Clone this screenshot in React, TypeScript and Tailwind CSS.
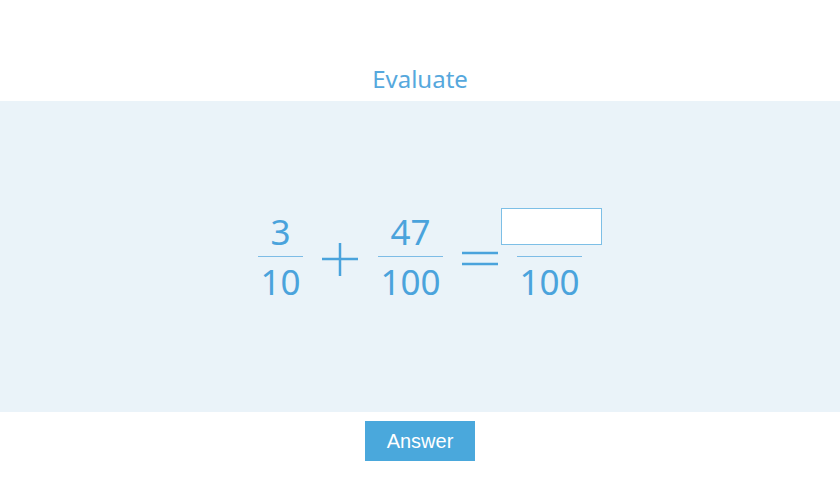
const blue = "text-[#4aa3dc]";

function Fraction({ top, bottom, width }: { top: string; bottom: string; width: string }) {
  return (
    <div className={`flex flex-col items-center ${width}`}>
      <div className={`h-[40px] leading-[40px] text-[35px] ${blue} mb-[4px]`}>{top}</div>
      <div className="h-px w-full bg-[#7dbce6]" />
      <div className={`h-[40px] leading-[40px] text-[35px] ${blue} mt-[5px]`}>{bottom}</div>
    </div>
  );
}

function Plus() {
  return (
    <svg width="36" height="36" viewBox="0 0 36 36" className="mt-[30px] shrink-0">
      <line x1="0" y1="17" x2="36" y2="17" stroke="#4aa3dc" strokeWidth="2.5" />
      <line x1="18" y1="1" x2="18" y2="34" stroke="#4aa3dc" strokeWidth="2.5" />
    </svg>
  );
}

function Equals() {
  return (
    <svg width="36" height="20" viewBox="0 0 36 20" className="mt-[36px] shrink-0">
      <line x1="0" y1="5" x2="36" y2="5" stroke="#4aa3dc" strokeWidth="2.5" />
      <line x1="0" y1="16" x2="36" y2="16" stroke="#4aa3dc" strokeWidth="2.5" />
    </svg>
  );
}

export default function App() {
  return (
    <div className="w-[840px] h-[501px] bg-white" style={{ fontFamily: '"Noto Sans", sans-serif' }}>
      {/* Title */}
      <div className="h-[101px] flex items-end justify-center pb-[6px]">
        <h1 className="text-[24px] leading-[32px] text-[#56a8dd]">Evaluate</h1>
      </div>

      {/* Equation panel */}
      <div className="h-[311px] bg-[#eaf3f9] flex items-center justify-center pl-[20px]">
        <div className="flex items-start">
          <Fraction top="3" bottom="10" width="w-[45px]" />
          <div className="ml-[19px]">
            <Plus />
          </div>
          <div className="ml-[20px]">
            <Fraction top="47" bottom="100" width="w-[65px]" />
          </div>
          <div className="ml-[19px]">
            <Equals />
          </div>
          <div className="ml-[3px] -mt-[4px] flex flex-col w-[101px]">
            <input
              type="text"
              className="h-[37px] w-[101px] bg-white border border-[#7dbfe6] mb-[11px] outline-none"
            />
            <div className="ml-[16px] w-[65px] flex flex-col items-center">
              <div className="h-px w-full bg-[#7dbce6]" />
              <div className={`h-[40px] leading-[40px] text-[35px] ${blue} mt-[5px]`}>100</div>
            </div>
          </div>
        </div>
      </div>

      {/* Answer button */}
      <div className="flex justify-center pt-[9px]">
        <button
          className="w-[110px] h-[40px] bg-[#4aa8dc] text-white text-[20px] flex items-center justify-center"
          style={{ fontFamily: '"Liberation Sans", Arial, sans-serif' }}
        >
          Answer
        </button>
      </div>
    </div>
  );
}
